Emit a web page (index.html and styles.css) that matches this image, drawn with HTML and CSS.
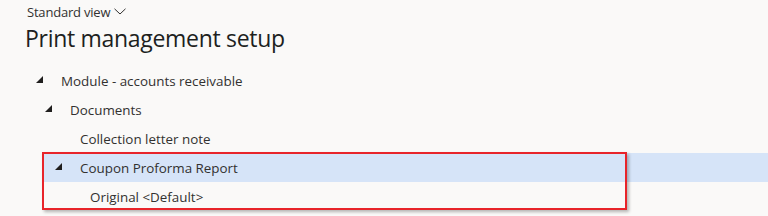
FILE: index.html
```html
<!DOCTYPE html>
<html lang="en">
<head>
<meta charset="utf-8">
<title>Print management setup</title>
<link rel="stylesheet" href="styles.css">
</head>
<body>
<div class="page">
  <div class="view-switch">
    <span class="view-name">Standard view</span>
    <svg class="chevron" width="12" height="7" viewBox="0 0 12 7"><polyline points="0.5,0.8 6,6 11.5,0.8" fill="none" stroke="#323130" stroke-width="1"/></svg>
  </div>
  <h1 class="title">Print management setup</h1>
  <div class="tree">
    <div class="row l0"><span class="twisty"><svg width="7" height="7" viewBox="0 0 7 7"><polygon points="7,0 7,7 0,7" fill="#201f1e"/></svg></span><span class="label">Module - accounts receivable</span></div>
    <div class="row l1"><span class="twisty"><svg width="7" height="7" viewBox="0 0 7 7"><polygon points="7,0 7,7 0,7" fill="#201f1e"/></svg></span><span class="label">Documents</span></div>
    <div class="row l2"><span class="twisty"></span><span class="label">Collection letter note</span></div>
    <div class="row l2 selected"><span class="twisty"><svg width="7" height="7" viewBox="0 0 7 7"><polygon points="7,0 7,7 0,7" fill="#201f1e"/></svg></span><span class="label">Coupon Proforma Report</span></div>
    <div class="row l3"><span class="twisty"></span><span class="label">Original &lt;Default&gt;</span></div>
    <div class="highlight-box"></div>
  </div>
</div>
</body>
</html>
```

FILE: styles.css
```css
html, body {
  margin: 0;
  padding: 0;
  background: #faf9f8;
}
body {
  font-family: "Open Sans", "Noto Sans", sans-serif;
  color: #323130;
  width: 768px;
  height: 216px;
  overflow: hidden;
}
.page {
  padding-top: 2px;
}
.view-switch {
  display: flex;
  align-items: center;
  gap: 4px;
  height: 20px;
  padding-left: 27px;
  font-size: 13px;
  letter-spacing: -0.2px;
  color: #323130;
}
.chevron {
  margin-top: -1px;
}
.title {
  margin: 0 0 0 25px;
  font-size: 23px;
  font-weight: 400;
  line-height: 32px;
  color: #201f1e;
  letter-spacing: -0.3px;
}
.tree {
  position: relative;
  margin-top: 12px;
  margin-left: 42px;
}
.row {
  display: flex;
  align-items: center;
  height: 29px;
  font-size: 13.4px;
  color: #323130;
}
.row.selected {
  background: #d6e4f8;
}
.l0 .twisty { margin-left: -6px; }
.l1 .twisty { margin-left: 3px; }
.l2 .twisty { margin-left: 13px; }
.l3 .twisty { margin-left: 23px; }
.twisty {
  display: flex;
  align-items: center;
  width: 25px;
  height: 29px;
  flex: none;
}
.twisty svg {
  margin-top: -2px;
}
.highlight-box {
  position: absolute;
  top: 86px;
  left: 0;
  width: 585px;
  height: 58px;
  box-sizing: border-box;
  border: 2px solid #e8242a;
  box-shadow: 2px 2px 3px rgba(0, 0, 0, 0.28);
}
```
